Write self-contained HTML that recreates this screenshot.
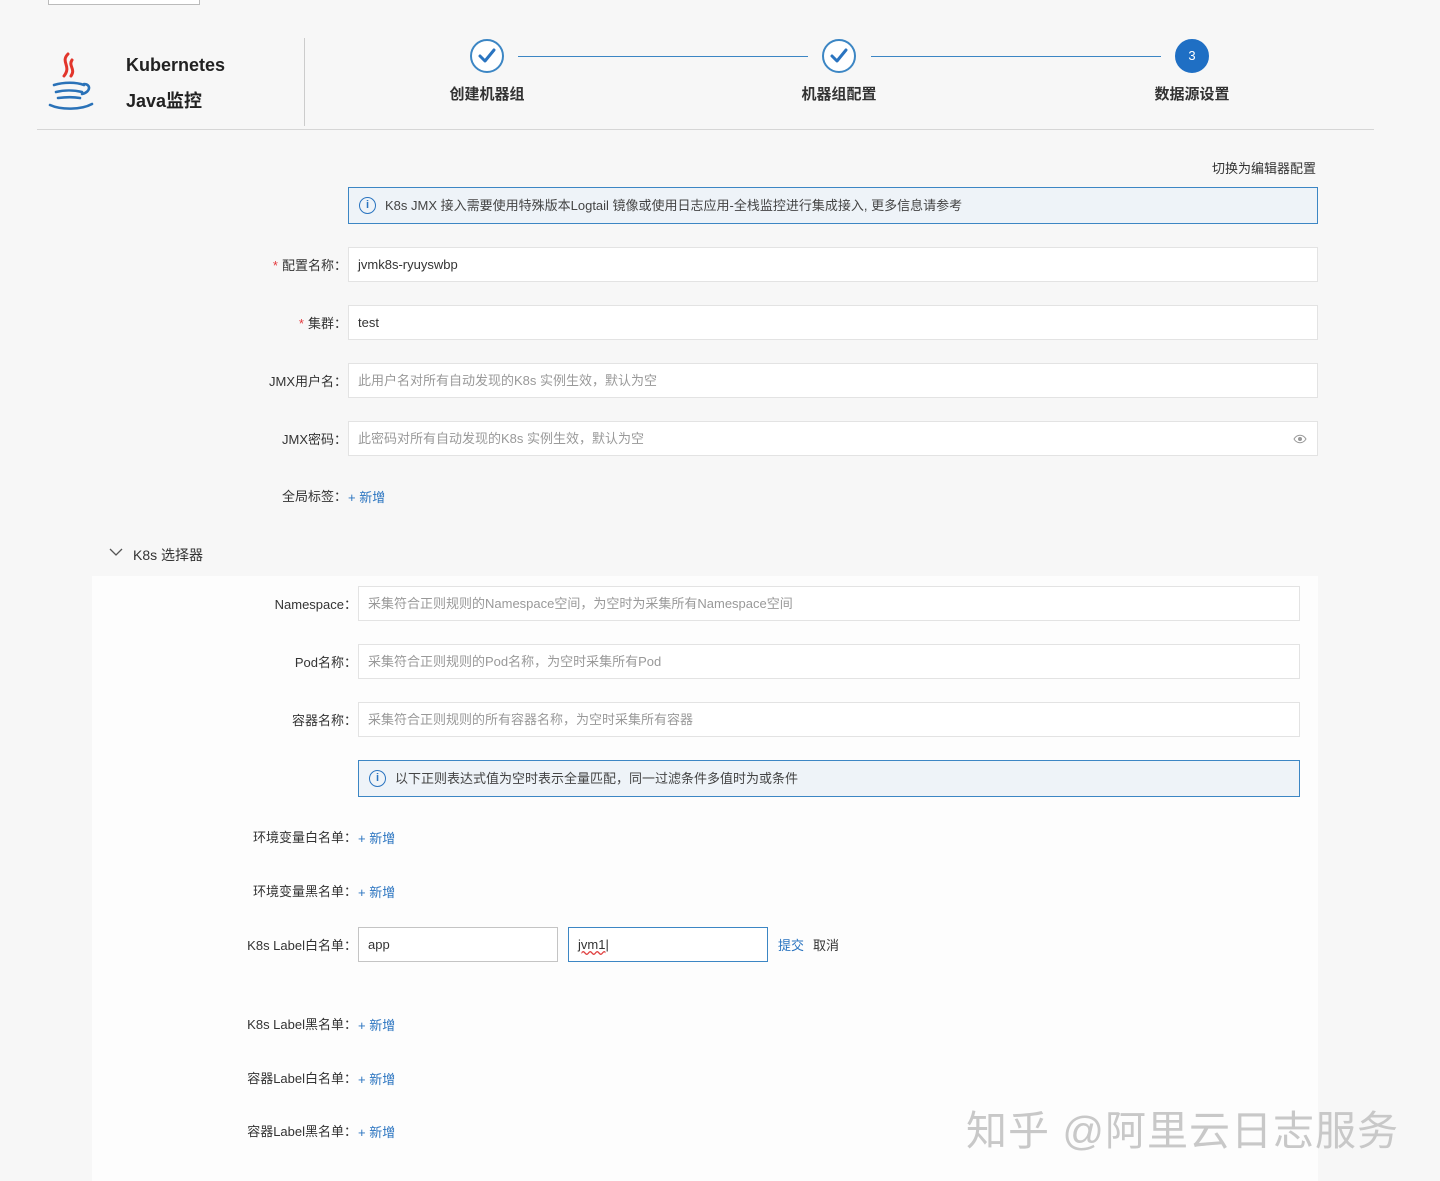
<!DOCTYPE html>
<html><head><meta charset="utf-8"><style>
*{box-sizing:border-box;margin:0;padding:0}
body{width:1440px;height:1181px;background:#f7f7f7;font-family:"Liberation Sans","Noto Sans CJK SC",sans-serif;font-size:13px;color:#333;position:relative;overflow:hidden}
.a{position:absolute}
.lbl{position:absolute;text-align:right;font-size:13px;color:#333;white-space:nowrap}
.req{color:#e4393c;margin-right:4px}
.inp{position:absolute;background:#fff;border:1px solid #e3e3e3;height:35px;padding-left:9px;line-height:33px;font-size:13px;color:#333}
.ph{color:#999}
.add{position:absolute;color:#2a74c0;font-size:13px}
.info{position:absolute;background:#eef3f8;border:1px solid #3c86c4;height:37px;line-height:35px;padding-left:36px;font-size:13px;color:#444}
.info i{position:absolute;left:10px;top:9px;width:17px;height:17px;border:1.5px solid #2a74c0;border-radius:50%;color:#2a74c0;font-style:normal;font-size:11px;line-height:14px;text-align:center;font-weight:bold}
.step{position:absolute;width:34px;height:34px;border-radius:50%;border:2px solid #3c86c4;background:#fff}
.sl{position:absolute;height:1px;background:#3c86c4;top:56px}
.st{position:absolute;font-size:15px;font-weight:bold;color:#333;width:160px;text-align:center;top:83px}
</style></head><body>
<div class="a" style="left:48px;top:-5px;width:152px;height:10px;border:1px solid #bbb;background:#fff"></div>
<svg class="a" style="left:46px;top:52px" width="50" height="62" viewBox="0 0 50 62">
<path d="M22 2 C14 10 26 14 18 24 M26 8 C22 14 30 17 25 24" stroke="#e2352b" stroke-width="3" fill="none" stroke-linecap="round"/>
<path d="M8 33 C18 30 30 30 38 33 M10 40 C18 38 28 38 36 40 M12 46 C20 45 28 45 34 46 M4 53 C15 58 35 58 46 52 M38 32 C45 32 45 40 36 42" stroke="#2a72b8" stroke-width="2.6" fill="none" stroke-linecap="round"/>
</svg>
<div class="a" style="left:126px;top:55px;font-size:18px;font-weight:bold;color:#222">Kubernetes</div>
<div class="a" style="left:126px;top:87px;font-size:18px;font-weight:bold;color:#222">Java监控</div>
<div class="a" style="left:304px;top:38px;width:1px;height:88px;background:#ccc"></div>
<div class="a" style="left:37px;top:129px;width:1337px;height:1px;background:#d6d6d6"></div>
<div class="step" style="left:470px;top:39px"><svg width="30" height="30" viewBox="0 0 30 30"><path d="M8 15 L13 20 L22 9" stroke="#2a74c0" stroke-width="3" fill="none" stroke-linecap="round" stroke-linejoin="round"/></svg></div>
<div class="step" style="left:822px;top:39px"><svg width="30" height="30" viewBox="0 0 30 30"><path d="M8 15 L13 20 L22 9" stroke="#2a74c0" stroke-width="3" fill="none" stroke-linecap="round" stroke-linejoin="round"/></svg></div>
<div class="step" style="left:1175px;top:39px;background:#1f6fc4;border-color:#1f6fc4;color:#fff;text-align:center;line-height:30px;font-size:13px">3</div>
<div class="sl" style="left:518px;width:290px"></div>
<div class="sl" style="left:871px;width:290px"></div>
<div class="st" style="left:407px">创建机器组</div>
<div class="st" style="left:759px">机器组配置</div>
<div class="st" style="left:1112px">数据源设置</div>
<div class="a" style="left:1212px;top:158px;font-size:13px">切换为编辑器配置</div>
<div class="info" style="left:348px;top:187px;width:970px"><i>i</i>K8s JMX 接入需要使用特殊版本Logtail 镜像或使用日志应用-全栈监控进行集成接入, 更多信息请参考</div>
<div class="lbl" style="right:1093px;top:255px"><span class="req">*</span>配置名称：</div>
<div class="inp" style="left:348px;top:247px;width:970px">jvmk8s-ryuyswbp</div>
<div class="lbl" style="right:1093px;top:313px"><span class="req">*</span>集群：</div>
<div class="inp" style="left:348px;top:305px;width:970px">test</div>
<div class="lbl" style="right:1093px;top:371px">JMX用户名：</div>
<div class="inp ph" style="left:348px;top:363px;width:970px">此用户名对所有自动发现的K8s 实例生效，默认为空</div>
<div class="lbl" style="right:1093px;top:429px">JMX密码：</div>
<div class="inp ph" style="left:348px;top:421px;width:970px">此密码对所有自动发现的K8s 实例生效，默认为空<svg class="a" style="right:10px;top:12px" width="14" height="10" viewBox="0 0 14 10"><path d="M1 5 C4 0 10 0 13 5 C10 10 4 10 1 5Z" stroke="#999" fill="none"/><circle cx="7" cy="5" r="2" fill="#999"/></svg></div>
<div class="lbl" style="right:1093px;top:486px">全局标签：</div>
<div class="add" style="left:348px;top:487px">+ 新增</div>
<svg class="a" style="left:109px;top:547px" width="14" height="10"><path d="M1 2 L7 8 L13 2" stroke="#555" fill="none" stroke-width="1.3"/></svg>
<div class="a" style="left:133px;top:545px;font-size:14px">K8s 选择器</div>
<div class="a" style="left:92px;top:576px;width:1226px;height:605px;background:#fdfdfd"></div>
<div class="lbl" style="right:1083px;top:594px">Namespace：</div>
<div class="inp ph" style="left:358px;top:586px;width:942px">采集符合正则规则的Namespace空间，为空时为采集所有Namespace空间</div>
<div class="lbl" style="right:1083px;top:652px">Pod名称：</div>
<div class="inp ph" style="left:358px;top:644px;width:942px">采集符合正则规则的Pod名称，为空时采集所有Pod</div>
<div class="lbl" style="right:1083px;top:710px">容器名称：</div>
<div class="inp ph" style="left:358px;top:702px;width:942px">采集符合正则规则的所有容器名称，为空时采集所有容器</div>
<div class="info" style="left:358px;top:760px;width:942px"><i>i</i>以下正则表达式值为空时表示全量匹配，同一过滤条件多值时为或条件</div>
<div class="lbl" style="right:1083px;top:827px">环境变量白名单：</div><div class="add" style="left:358px;top:828px">+ 新增</div>
<div class="lbl" style="right:1083px;top:881px">环境变量黑名单：</div><div class="add" style="left:358px;top:882px">+ 新增</div>
<div class="lbl" style="right:1083px;top:935px">K8s Label白名单：</div>
<div class="inp" style="left:358px;top:927px;width:200px;border-color:#c4c4c4">app</div>
<div class="inp" style="left:568px;top:927px;width:200px;border:1.5px solid #3c86c4"><span style="text-decoration:underline wavy #e04040">jvm1</span>|</div>
<div class="add" style="left:778px;top:935px">提交</div>
<div class="a" style="left:813px;top:935px">取消</div>
<div class="lbl" style="right:1083px;top:1014px">K8s Label黑名单：</div><div class="add" style="left:358px;top:1015px">+ 新增</div>
<div class="lbl" style="right:1083px;top:1068px">容器Label白名单：</div><div class="add" style="left:358px;top:1069px">+ 新增</div>
<div class="lbl" style="right:1083px;top:1121px">容器Label黑名单：</div><div class="add" style="left:358px;top:1122px">+ 新增</div>
<div class="a" style="left:966px;top:1097px;font-size:41px;color:#c8c8c8;letter-spacing:1px;white-space:nowrap">知乎 @阿里云日志服务</div>
</body></html>
